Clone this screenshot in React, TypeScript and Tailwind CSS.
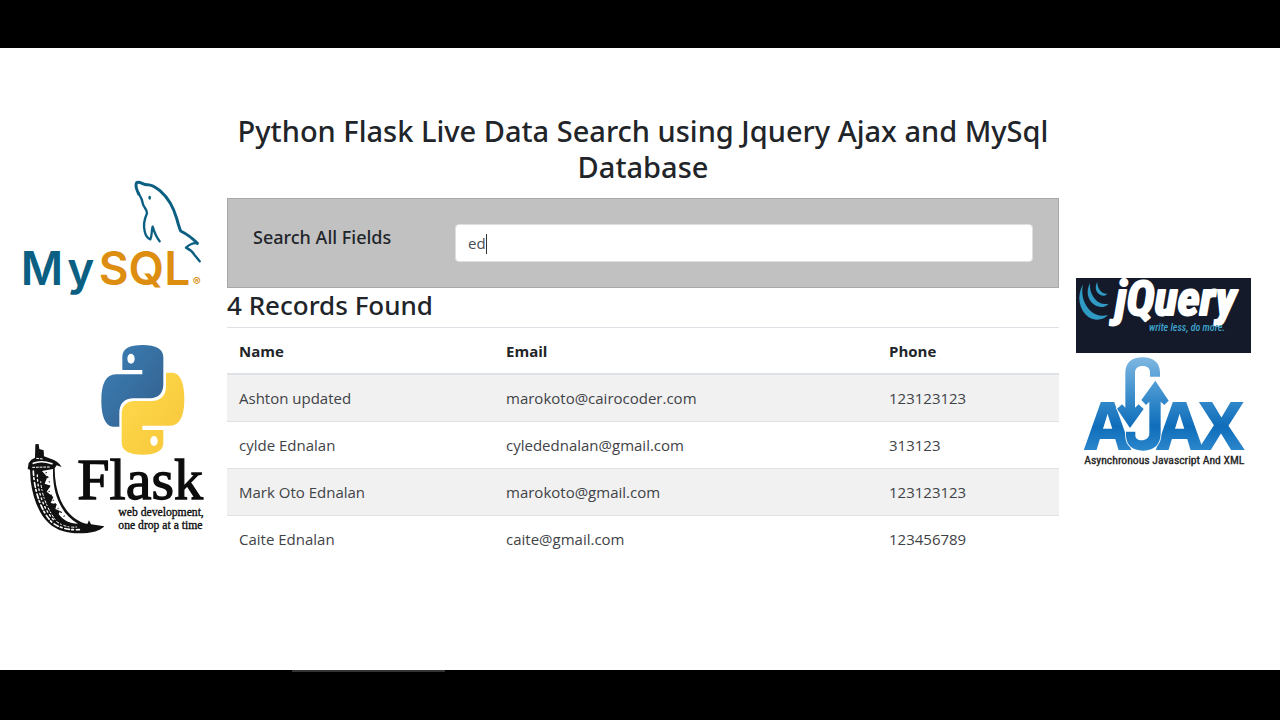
import React, { useState } from 'react';

interface Employee {
    name: string;
    email: string;
    phone: string;
}

const employees: Employee[] = [
    { name: 'Ashton updated', email: 'marokoto@cairocoder.com', phone: '123123123' },
    { name: 'cylde Ednalan', email: 'cyledednalan@gmail.com', phone: '313123' },
    { name: 'Mark Oto Ednalan', email: 'marokoto@gmail.com', phone: '123123123' },
    { name: 'Caite Ednalan', email: 'caite@gmail.com', phone: '123456789' },
];

function MySqlLogo() {
    return (
        <svg className="w-[185px] h-[120px] overflow-visible" viewBox="30 30 555 360" role="img" aria-label="MySQL">
            <g fill="none" stroke="#0b5f82" strokeLinecap="round" strokeLinejoin="round">
                <path strokeWidth="9" d="M386 72C380 60 375 46 380 38C388 32 400 45 413 44C430 44 440 54 452 64C480 88 492 118 500 145C504 160 508 174 512 183C526 190 545 202 562 220" />
                <path strokeWidth="7" d="M562 220C550 218 538 224 528 233C542 240 548 246 553 254L569 274" />
                <path strokeWidth="7" d="M386 70C394 82 398 94 400 106C404 114 412 120 411 130C403 148 400 168 404 184C407 198 414 206 421 208C426 200 424 184 428 170C432 184 438 200 449 214" />
            </g>
            <ellipse cx="419" cy="83" rx="4" ry="6" fill="#0b5f82" />
            <g fontFamily="Inter, sans-serif" fontSize="138" fontWeight="600">
                <text x="32" y="346" fill="#0b5f82">M</text>
                <text x="172" y="346" fill="#0b5f82">y</text>
                <text x="266" y="346" fill="#dd8d10">SQL</text>
            </g>
            <text x="548" y="348" fill="#dd8d10" fontFamily="Inter, sans-serif" fontSize="36" fontWeight="600">®</text>
        </svg>
    );
}

function PythonFlaskLogo() {
    return (
        <svg className="w-[190px] h-[210px] overflow-visible" viewBox="30 0 570 630" role="img" aria-label="Python and Flask">
            <defs>
                <linearGradient id="py-blue" x1="0" y1="0" x2="1" y2="1">
                    <stop offset="0" stopColor="#3c80b8" />
                    <stop offset="1" stopColor="#335f8b" />
                </linearGradient>
                <linearGradient id="py-yellow" x1="0" y1="0" x2="1" y2="1">
                    <stop offset="0" stopColor="#ffdb4d" />
                    <stop offset="1" stopColor="#f7c63a" />
                </linearGradient>
            </defs>
            <path fill="url(#py-blue)" d="M337 105V66C337 40 358 30 398 30C438 30 460 42 460 66V148C460 176 444 190 420 190H372C342 190 328 206 328 236V275H308C284 272 274 240 274 197C274 146 288 118 318 118H397V105Z" />
            <ellipse cx="363" cy="71" rx="11" ry="15" fill="#fff" />
            <path fill="url(#py-yellow)" d="M468 113H490C514 117 523 150 523 192C523 240 511 272 480 272H397V285H460V323C460 347 438 359 398 359C358 359 335 347 335 323V238C335 212 350 198 374 198H424C452 198 468 182 468 154Z" />
            <ellipse cx="432" cy="318" rx="11" ry="15" fill="#fff" />

            {/* Horn */}
            <path fill="#111" d="M76 328L86 327L88 342L101 346L102 364L124 372C137 376 148 384 155 396L140 391L134 400C134 436 140 468 152 496C168 532 198 560 232 567L237 556L243 568L283 574C274 584 256 592 232 594C186 598 146 592 116 564C84 534 68 484 62 438L60 404L53 402L56 384L64 374L75 368Z" />
            <path fill="#fff" d="M96 408L129 402C128 446 136 480 148 504C160 530 178 552 204 566C178 566 160 556 146 538L150 528L136 522L140 508L122 504L130 486L110 470L122 452L104 446L112 426Z" />
            <g fill="none" stroke="#fff" strokeLinecap="round">
                <path strokeWidth="5" strokeDasharray="14 7 5 9" d="M70 408C72 460 90 524 124 560C144 578 174 586 208 584" />
                <path strokeWidth="4" strokeDasharray="5 9" d="M82 420C82 462 98 520 132 556" />
                <path strokeWidth="3" strokeDasharray="3 8 7 6" d="M92 440C96 480 110 520 140 560C160 574 180 578 200 576" />
                <path strokeWidth="5" d="M70 385C88 377 108 380 126 386" />
                <path strokeWidth="3" strokeDasharray="6 5" d="M80 370L98 372M68 397L118 396" />
            </g>
            <path fill="none" stroke="#111" strokeWidth="4" strokeDasharray="3 9 6 11" d="M108 412L118 440L116 466L132 500L144 520L166 548" />

            <g fill="#0c0c0c" stroke="#0c0c0c" fontFamily="'Liberation Serif', serif">
                <text x="202" y="493" fontSize="174" strokeWidth="4">Flask</text>
                <text x="325" y="543" fontSize="35" strokeWidth="1">web development,</text>
                <text x="325" y="583" fontSize="35" strokeWidth="1">one drop at a time</text>
            </g>
        </svg>
    );
}

function JQueryLogo() {
    return (
        <svg className="w-[175px] h-[75px] overflow-visible" viewBox="33 23 525 225" role="img" aria-label="jQuery">
            <rect x="33" y="23" width="525" height="225" fill="#141a2a" />
            <g fill="#2f9bc4">
                <path d="M54 42C34 78 42 118 70 140C92 154 116 148 129 134C108 140 88 134 73 118C54 98 48 70 54 42Z" />
                <path d="M75 38C62 64 68 88 86 102C102 114 120 112 131 100C114 104 100 98 90 86C78 72 74 56 75 38Z" />
                <path d="M97 34C89 50 92 62 102 71C110 78 120 78 127 70C117 71 110 67 105 60C99 52 97 44 97 34Z" />
            </g>
            <text x="150" y="133" fill="#fff" stroke="#fff" strokeWidth="6" strokeLinejoin="round" fontFamily="'Roboto Condensed', 'Liberation Sans', sans-serif" fontSize="144" fontWeight="700" fontStyle="italic">jQuery</text>
            <text x="252" y="182" fill="#3fa3cb" fontFamily="'Roboto Condensed', 'Liberation Sans', sans-serif" fontSize="30" fontWeight="500" fontStyle="italic">write less, do more.</text>
        </svg>
    );
}

function AjaxLogo() {
    return (
        <svg className="w-[175px] h-[120px] overflow-visible" viewBox="18 15 525 360" role="img" aria-label="Ajax">
            <defs>
                <linearGradient id="ajax-blue" gradientUnits="userSpaceOnUse" x1="0" y1="20" x2="0" y2="300">
                    <stop offset="0" stopColor="#7fb8e2" />
                    <stop offset="0.5" stopColor="#2f86c8" />
                    <stop offset="0.75" stopColor="#0f6dba" />
                    <stop offset="1" stopColor="#2b86cb" />
                </linearGradient>
            </defs>
            <g fill="url(#ajax-blue)" stroke="url(#ajax-blue)" strokeWidth="6" fontFamily="'Open Sans', sans-serif" fontSize="194" fontWeight="700">
                <text x="46" y="296">A</text>
                <text x="262" y="296">A</text>
                <text x="389" y="296">X</text>
            </g>
            <g fill="url(#ajax-blue)" stroke="#fff" strokeWidth="5" paintOrder="stroke">
                <path d="M168 245H196V256C196 266 204 271 214 271C228 271 238 264 238 250V155L228 165L214 150L256 92L296 152L283 165L272 155V250C272 284 252 302 220 302C186 302 168 284 168 256Z" />
                <path d="M166 173V70C166 38 184 22 218 22C250 22 270 38 270 68V80H240V68C240 54 232 48 218 48C202 48 195 56 195 70V173L206 163L221 177L180 234L141 176L156 163Z" />
            </g>
            <text x="43" y="342" fill="#222" stroke="#222" fontFamily="'Roboto Condensed', 'Liberation Sans', sans-serif" fontSize="35">Asynchronous Javascript And XML</text>
        </svg>
    );
}

export default function App() {
    const [query, setQuery] = useState('ed');

    const needle = query.toLowerCase();
    const results = employees.filter((e) => `${e.name} ${e.email} ${e.phone}`.toLowerCase().includes(needle));

    return (
        <div className="min-h-screen flex flex-col bg-black font-['Noto_Sans',sans-serif] text-[#212529]">
            <div className="h-12" />

            <div className="flex-1 flex items-start bg-white">
                {/* Left logos */}
                <aside className="w-[227px] shrink-0 pl-5 pt-[132px] flex flex-col gap-[35px]">
                    <MySqlLogo />
                    <PythonFlaskLogo />
                </aside>

                <main className="flex-1 min-w-0 pt-[65px]">
                    <h1 className="text-[29px] leading-9 font-medium text-center mb-[13px]">
                        Python Flask Live Data Search using Jquery Ajax and MySql Database
                    </h1>

                    {/* Search bar */}
                    <div className="flex items-start bg-[#c1c1c1] border border-[#a8a8a8] p-[25px]">
                        <label htmlFor="search" className="w-[202px] shrink-0 text-lg leading-[26px] font-medium">
                            Search All Fields
                        </label>
                        <div className="relative flex-1">
                            <input
                                id="search"
                                type="text"
                                value={query}
                                onChange={(e) => setQuery(e.target.value)}
                                className="peer block w-full h-[38px] px-3 rounded border border-[#dcdfe2] bg-white font-['Open_Sans',sans-serif] text-[15px] text-[#495057] outline-none"
                            />
                            {/* Resting caret, replaced by the native one on focus */}
                            <span className="absolute left-[31px] top-[10px] w-px h-5 bg-[#333] peer-focus:hidden" />
                        </div>
                    </div>

                    <h2 className="text-[26px] leading-[34px] font-medium mb-[5px]">{results.length} Records Found</h2>

                    <table className="w-full border-separate border-spacing-0 text-left font-['Open_Sans',sans-serif] text-[15px] leading-[22px]">
                        <thead>
                            <tr>
                                <th className="w-[267px] px-3 pt-3 pb-[11px] font-bold border-t border-b-2 border-[#dee2e6]">Name</th>
                                <th className="w-[383px] px-3 pt-3 pb-[11px] font-bold border-t border-b-2 border-[#dee2e6]">Email</th>
                                <th className="px-3 pt-3 pb-[11px] font-bold border-t border-b-2 border-[#dee2e6]">Phone</th>
                            </tr>
                        </thead>
                        <tbody className="text-[#3f4347]">
                            {results.map((e) => (
                                <tr key={e.email} className="group odd:bg-[#f1f1f1]">
                                    <td className="px-3 py-3 border-t border-[#dee2e6] group-first:border-t-0">{e.name}</td>
                                    <td className="px-3 py-3 border-t border-[#dee2e6] group-first:border-t-0">{e.email}</td>
                                    <td className="px-3 py-3 border-t border-[#dee2e6] group-first:border-t-0">{e.phone}</td>
                                </tr>
                            ))}
                        </tbody>
                    </table>
                </main>

                {/* Right logos */}
                <aside className="w-[221px] shrink-0 pl-[17px] pt-[230px] flex flex-col gap-0.5">
                    <JQueryLogo />
                    <AjaxLogo />
                </aside>
            </div>

            <div className="h-[50px]">
                <div className="ml-[292px] w-[153px] h-0.5 bg-[#333]" />
            </div>
        </div>
    );
}
